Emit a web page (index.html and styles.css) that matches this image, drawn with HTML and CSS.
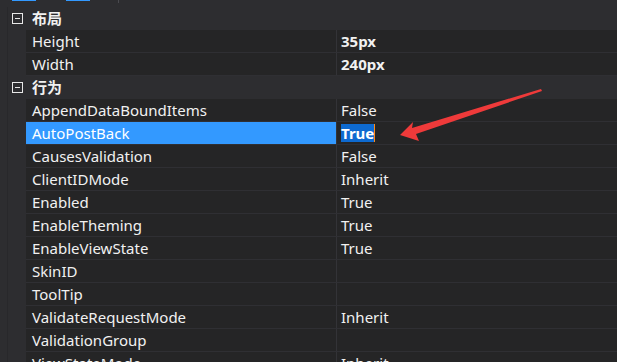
FILE: index.html
```html
<!DOCTYPE html>
<html>
<head>
<meta charset="utf-8">
<link rel="stylesheet" href="styles.css">
</head>
<body>
<div class="panel">
  <div class="toolbar">
    <span class="tbtn tb1"></span>
    <span class="tbtn tb2"></span>
    <span class="tsep"></span>
  </div>
  <div class="grid">
    <div class="cat"><span class="gut"><span class="box"></span></span><span class="catlabel">布局</span></div>
    <div class="row"><span class="gut"></span><span class="name">Height</span><span class="val bold">35px</span></div>
    <div class="row"><span class="gut"></span><span class="name">Width</span><span class="val bold">240px</span></div>
    <div class="cat"><span class="gut"><span class="box"></span></span><span class="catlabel">行为</span></div>
    <div class="row"><span class="gut"></span><span class="name">AppendDataBoundItems</span><span class="val">False</span></div>
    <div class="row sel"><span class="gut"></span><span class="name">AutoPostBack</span><span class="val bold"><span class="hl">True</span><span class="caret"></span></span></div>
    <div class="row"><span class="gut"></span><span class="name">CausesValidation</span><span class="val">False</span></div>
    <div class="row"><span class="gut"></span><span class="name">ClientIDMode</span><span class="val">Inherit</span></div>
    <div class="row"><span class="gut"></span><span class="name">Enabled</span><span class="val">True</span></div>
    <div class="row"><span class="gut"></span><span class="name">EnableTheming</span><span class="val">True</span></div>
    <div class="row"><span class="gut"></span><span class="name">EnableViewState</span><span class="val">True</span></div>
    <div class="row"><span class="gut"></span><span class="name">SkinID</span><span class="val"></span></div>
    <div class="row"><span class="gut"></span><span class="name">ToolTip</span><span class="val"></span></div>
    <div class="row"><span class="gut"></span><span class="name">ValidateRequestMode</span><span class="val">Inherit</span></div>
    <div class="row"><span class="gut"></span><span class="name">ValidationGroup</span><span class="val"></span></div>
    <div class="row"><span class="gut"></span><span class="name">ViewStateMode</span><span class="val">Inherit</span></div>
  </div>
  <svg class="arrow" width="617" height="362" viewBox="0 0 617 362">
    <polygon points="400,135 413,122 412,128 541,89 542,91 416,134 419,141" fill="#ef3a3a"/>
  </svg>
</div>
</body>
</html>
```
FILE: styles.css
```css
html, body {
  margin: 0;
  padding: 0;
  background: #2d2d30;
  overflow: hidden;
}
.panel {
  position: relative;
  width: 617px;
  height: 362px;
  overflow: hidden;
  background: #2d2d30;
  font-family: "Noto Sans", "Noto Sans CJK SC", sans-serif;
  font-size: 15px;
  color: #f1f1f1;
}
.toolbar {
  position: relative;
  height: 7px;
  display: flex;
  align-items: flex-start;
}
.tbtn {
  display: block;
  width: 22px;
  height: 1px;
  margin-top: -1px;
  border: 1px solid #3399ff;
  border-top: none;
}
.tb1 { margin-left: 12px; }
.tb2 { margin-left: 30px; }
.tsep {
  display: block;
  width: 1px;
  height: 3px;
  background: #4a4a4f;
  margin-left: 28px;
}
.grid {
  display: flex;
  flex-direction: column;
}
.cat, .row {
  display: flex;
  height: 23px;
  line-height: 22px;
}
.gut {
  width: 26px;
  flex: none;
  display: flex;
  align-items: center;
  justify-content: flex-start;
  box-sizing: border-box;
  border-left: 7px solid #2d2d30;
  padding-left: 5px;
  position: relative;
}
.gut::before {
  content: "";
  position: absolute;
  left: 0;
  top: 0;
  bottom: 0;
  width: 1px;
  background: #28282b;
}
.box {
  width: 9px;
  height: 9px;
  border: 1px solid #e8e8e8;
  position: relative;
  margin-top: 0px;
}
.box::after {
  content: "";
  position: absolute;
  left: 2px;
  right: 2px;
  top: 4px;
  height: 1px;
  background: #e8e8e8;
}
.catlabel {
  font-weight: bold;
  padding-left: 6px;
}
.row .name {
  width: 310px;
  flex: none;
  box-sizing: border-box;
  padding-left: 6px;
  background: #252526;
  border-bottom: 1px solid #2f2f33;
  white-space: nowrap;
  overflow: hidden;
}
.row .val {
  flex: 1;
  background: #252526;
  border-left: 1px solid #333337;
  border-bottom: 1px solid #2f2f33;
  padding-left: 4px;
  display: flex;
  align-items: center;
}
.bold { font-weight: bold; }
.row.sel .name {
  background: #3399ff;
  color: #ffffff;
}
.hl {
  background: #0e6ad0;
  color: #ffffff;
  line-height: 18px;
  height: 18px;
}
.caret {
  width: 1px;
  height: 18px;
  background: #ff8c1a;
}
.arrow {
  position: absolute;
  left: 0;
  top: 0;
}
```
